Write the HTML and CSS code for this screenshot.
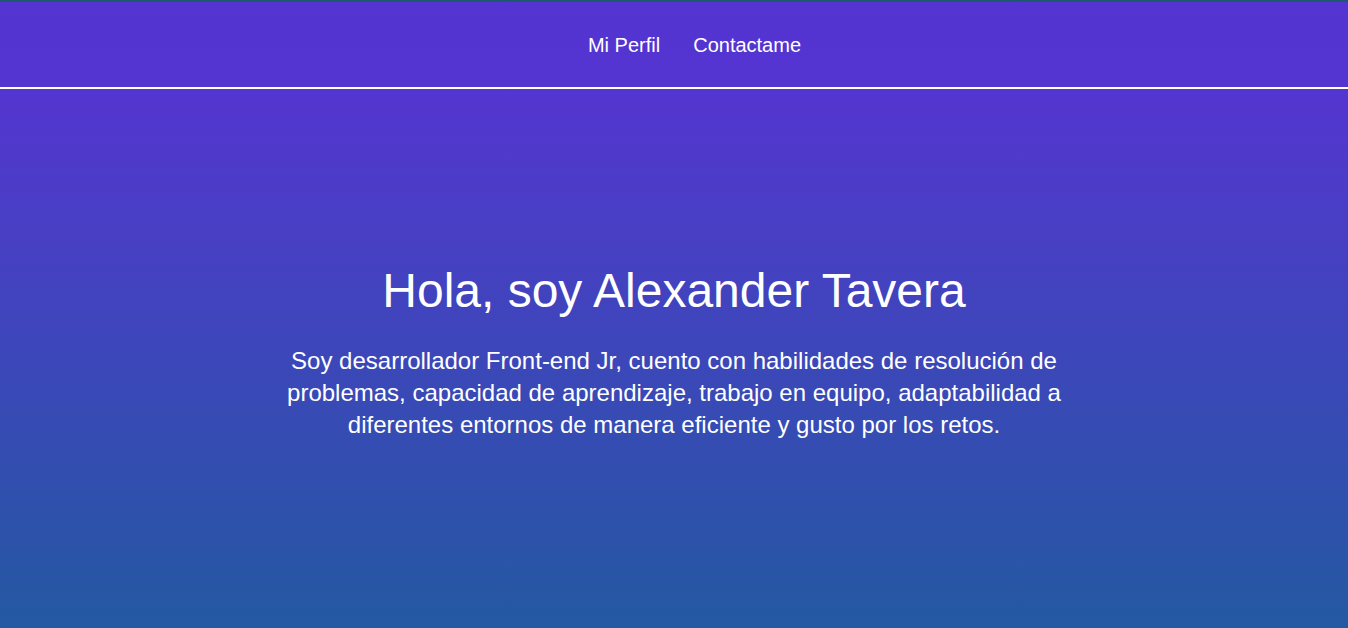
FILE: index.html
```html
<!DOCTYPE html>
<html lang="es">
<head>
    <meta charset="UTF-8">
    <meta name="viewport" content="width=device-width, initial-scale=1.0">
    <title>Alexander Tavera</title>
    <link rel="stylesheet" href="styles.css">
</head>
<body>
    <header class="header">
        <nav class="nav">
            <a href="#perfil">Mi Perfil</a>
            <a href="#contacto">Contactame</a>
        </nav>
    </header>
    <section class="hero">
        <h1>Hola, soy Alexander Tavera</h1>
        <p>Soy desarrollador Front-end Jr, cuento con habilidades de resolución de problemas, capacidad de aprendizaje, trabajo en equipo, adaptabilidad a diferentes entornos de manera eficiente y gusto por los retos.</p>
    </section>
</body>
</html>
```

FILE: styles.css
```css
html, body {
    margin: 0;
    height: 100%;
}
body {
    font-family: "Liberation Sans", Arial, sans-serif;
    color: #fff;
    background: linear-gradient(to bottom, #5434d2 0%, #5435d0 14%, #2459a2 100%);
    border-top: 2px solid #1b5a6b;
    box-sizing: border-box;
    overflow: hidden;
}
.header {
    height: 85px;
    border-bottom: 2px solid #fff;
    display: flex;
    align-items: center;
    justify-content: center;
}
.nav {
    display: flex;
    gap: 33px;
    margin-left: 41px;
    padding-top: 2px;
}
.nav a {
    color: #fff;
    text-decoration: none;
    font-size: 20px;
}
.hero {
    padding-top: 174px;
    text-align: center;
}
.hero h1 {
    margin: 0;
    font-size: 48px;
    font-weight: normal;
}
.hero p {
    width: 810px;
    margin: 27px auto 0;
    font-size: 24px;
    line-height: 32px;
}
```
